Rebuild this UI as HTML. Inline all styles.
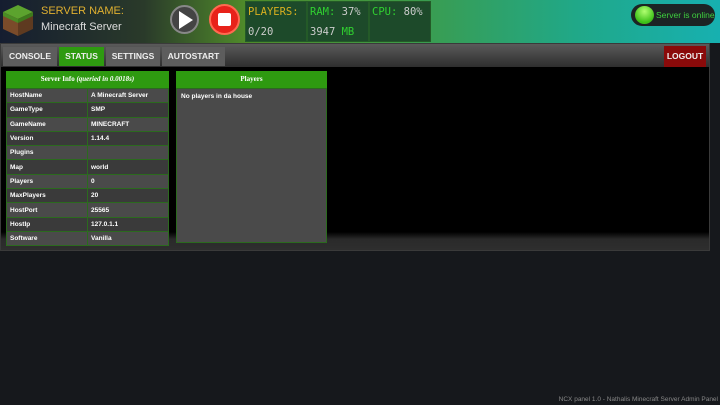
<!DOCTYPE html>
<html><head><meta charset="utf-8"><style>
*{margin:0;padding:0;box-sizing:border-box}
body{width:720px;height:405px;background:#16181c;font-family:"Liberation Sans",sans-serif;position:relative;overflow:hidden}
.hdr{position:absolute;left:0;top:0;width:720px;height:43px;background:linear-gradient(90deg,#151d30 0%,#2a3a2a 20%,#4f8a2a 34%,#3f9a45 55%,#20a888 80%,#17b0b0 100%)}
.abs{position:absolute}
.stat{position:absolute;top:1px;height:41px;background:#1d4a2a;border:1px solid #245a28;font-family:"DejaVu Sans Mono",monospace;font-size:10.5px;padding:5px 2px;white-space:nowrap;line-height:20px}
.panel{position:absolute;left:0;top:43px;width:710px;height:208px;background:#000;border:1px solid #3a3a3a}
.tabbar{position:absolute;left:0;top:0;width:708px;height:23px;background:linear-gradient(#5a5a5a,#2e2e2e)}
.tab{position:absolute;top:3px;height:19px;background:#5d5d5d;color:#eee;font-weight:bold;font-size:8.5px;line-height:19px;text-align:center}
table{border-collapse:collapse;font-family:"Liberation Sans",sans-serif;font-weight:bold;font-size:6.5px;color:#fff}
td{border:1px solid #2b6a1e;height:14.3px;padding-left:3px}
</style></head><body>
<div class="hdr"></div>
<svg class="abs" style="left:2px;top:3px" width="32" height="34"><polygon points="16,2 31,9 16,16 1,9" fill="#5ca32e"/><polygon points="1,9 16,16 16,33 1,26" fill="#7a4b2a"/><polygon points="31,9 16,16 16,33 31,26" fill="#5e3a20"/><polygon points="1,9 16,16 16,20 1,13" fill="#4a8c24"/><polygon points="31,9 16,16 16,20 31,13" fill="#3d7a1c"/></svg>
<div class="abs" style="left:41px;top:5px;color:#e0b030;font-size:11px">SERVER NAME:</div>
<div class="abs" style="left:41px;top:21px;color:#ddd;font-size:11px">Minecraft Server</div>
<div class="abs" style="left:170px;top:5px;width:29px;height:29px;border-radius:50%;background:#444;border:2px solid #888"></div>
<svg class="abs" style="left:178px;top:11px" width="16" height="18"><polygon points="1,0 15,9 1,18" fill="#fff"/></svg>
<div class="abs" style="left:209px;top:4px;width:31px;height:31px;border-radius:50%;background:#e8221a;border:2px solid #ff6a50"></div>
<div class="abs" style="left:218px;top:13px;width:13px;height:13px;border-radius:2px;background:#fff"></div>
<div class="stat" style="left:245px;width:62px;color:#d8b020;padding-top:0">PLAYERS:<br><span style="color:#ccc">0/20</span></div>
<div class="stat" style="left:307px;width:62px;color:#ccc;padding-top:0"><span style="color:#30d030">RAM:</span> 37%<br>3947 <span style="color:#30d030">MB</span></div>
<div class="stat" style="left:369px;width:62px;color:#ccc;padding-top:0"><span style="color:#30d030">CPU:</span> 80%</div>
<div class="abs" style="left:631px;top:4px;width:84px;height:22px;border-radius:11px;background:#1c2424"></div>
<div class="abs" style="left:635px;top:6px;width:19px;height:18px;border-radius:50%;background:radial-gradient(circle at 50% 30%,#b0ff70,#3cc018 70%)"></div>
<div class="abs" style="left:656px;top:10px;color:#3ed03e;font-size:8.5px">Server is online</div>
<div class="panel">
<div class="tabbar"></div>
<div class="tab" style="left:2px;width:54px">CONSOLE</div>
<div class="tab" style="left:58px;width:45px;background:#2e9a10">STATUS</div>
<div class="tab" style="left:105px;width:54px">SETTINGS</div>
<div class="tab" style="left:161px;width:63px">AUTOSTART</div>
<div class="tab" style="left:663px;width:42px;background:#8a0a0a;top:2px;height:21px;line-height:21px">LOGOUT</div>
<div class="abs" style="left:0;top:188px;width:708px;height:18px;background:linear-gradient(#000,#2a2a2a 40%,#2e2e2e)"></div>
<div class="abs" style="left:5px;top:27px;width:163px;background:#2e9a10;height:17px;color:#fff;font-family:'Liberation Serif',serif;font-weight:bold;font-size:7px;text-align:center;line-height:17px">Server Info <i>(queried in 0.0018s)</i></div>
<table class="abs" style="left:5px;top:44px;width:163px">
<tr style="background:#4a4a4a"><td style="width:81px">HostName</td><td>A Minecraft Server</td></tr>
<tr style="background:#3a3a3a"><td>GameType</td><td>SMP</td></tr>
<tr style="background:#4a4a4a"><td>GameName</td><td>MINECRAFT</td></tr>
<tr style="background:#3a3a3a"><td>Version</td><td>1.14.4</td></tr>
<tr style="background:#4a4a4a"><td>Plugins</td><td></td></tr>
<tr style="background:#3a3a3a"><td>Map</td><td>world</td></tr>
<tr style="background:#4a4a4a"><td>Players</td><td>0</td></tr>
<tr style="background:#3a3a3a"><td>MaxPlayers</td><td>20</td></tr>
<tr style="background:#4a4a4a"><td>HostPort</td><td>25565</td></tr>
<tr style="background:#3a3a3a"><td>HostIp</td><td>127.0.1.1</td></tr>
<tr style="background:#4a4a4a"><td>Software</td><td>Vanilla</td></tr>
</table>
<div class="abs" style="left:175px;top:27px;width:151px;background:#2e9a10;height:17px;color:#fff;font-family:'Liberation Serif',serif;font-weight:bold;font-size:7px;text-align:center;line-height:17px">Players</div>
<div class="abs" style="left:175px;top:44px;width:151px;height:155px;background:#4a4a4a;border:1px solid #2b6a1e;color:#fff;font-family:'Liberation Sans',sans-serif;font-weight:bold;font-size:6.5px;padding:4px 4px">No players in da house</div>
</div>
<div class="abs" style="right:2px;top:396px;color:#888;font-size:6.5px">NCX panel 1.0 - Nathalis Minecraft Server Admin Panel</div>
</body></html>
